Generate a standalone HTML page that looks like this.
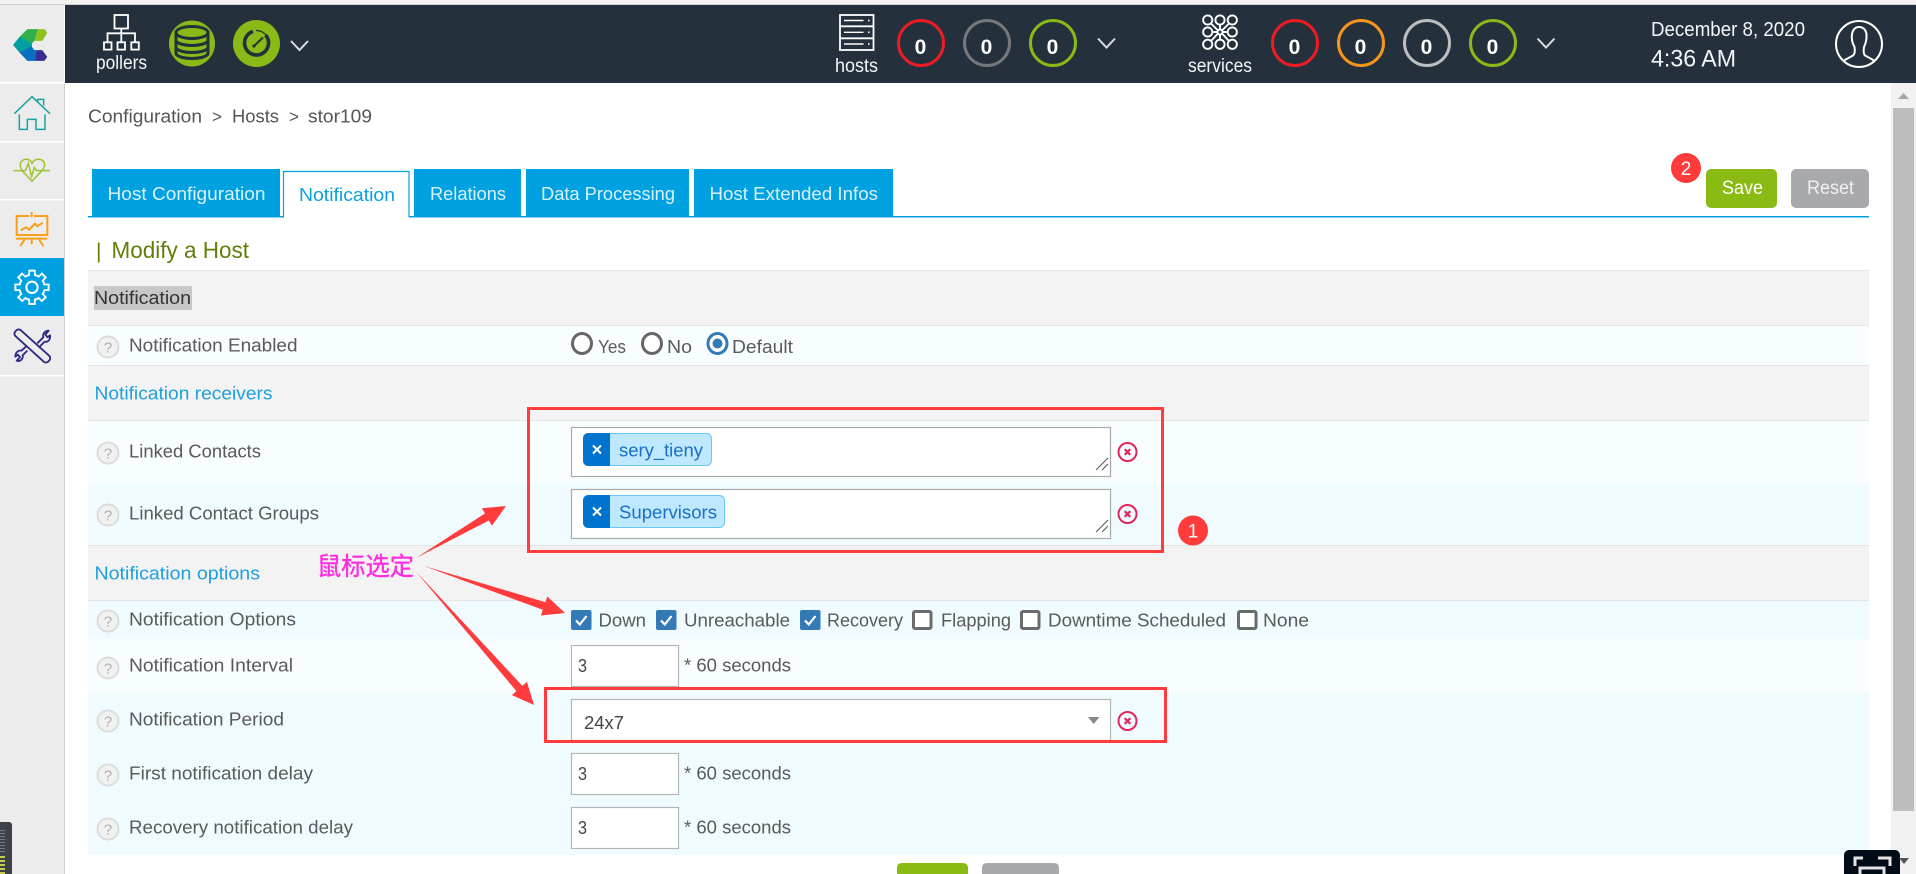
<!DOCTYPE html>
<html lang="en"><head><meta charset="utf-8"><title>Modify a Host</title>
<style>
html,body{margin:0;padding:0;background:#fff;width:1916px;height:874px;overflow:hidden}
svg{display:block}
text{font-family:"Liberation Sans","Noto Sans CJK SC",sans-serif;font-size:18px;fill:#5a5a5a}
.w{fill:#fff}.hd{font-size:19px;fill:#f2f6f8}.z{font-size:21px;font-weight:700;fill:#fff}
.tab{font-size:18.5px;fill:#d8f1fb}.blue{fill:#1d9fe0}
.chip{fill:#1a6fc9}
</style></head><body>
<svg width="1916" height="874" viewBox="0 0 1916 874" xmlns="http://www.w3.org/2000/svg">
<defs>
<g id="help"><circle r="10.5" fill="#f1f1f1" stroke="#dcdcdc" stroke-width="2"/><text x="0" y="5.5" text-anchor="middle" style="font-size:15px;fill:#b0b0b0">?</text></g>
<g id="rm" fill="none" stroke="#e2275c"><circle r="9" stroke-width="2"/><path d="M-2.8 -2.8L2.8 2.8M2.8 -2.8L-2.8 2.8" stroke-width="2.2"/></g>
<g id="cb"><rect width="20.5" height="20" rx="2" fill="#337ab7"/><path d="M5 10.5L8.8 14.5L15.5 6" fill="none" stroke="#fff" stroke-width="2.2"/></g>
<g id="ub"><rect x="1.5" y="1.5" width="17.5" height="17" rx="1.5" fill="#fff" stroke="#6b6b6b" stroke-width="3"/></g>
<g id="rs" stroke="#555" stroke-width="1"><path d="M1096 470L1108 458M1102 470L1108 464"/></g>
<path id="chev" d="M0 0L8.5 9L17 0" fill="none" stroke="#d8dde0" stroke-width="2"/>
</defs>

<!-- chrome -->
<rect width="1916" height="4" fill="#f2f2f2"/><rect y="4" width="1916" height="1" fill="#cfcfcf"/>
<rect y="5" width="64" height="869" fill="#ececec"/><rect x="64" y="83" width="1" height="791" fill="#cfcfcf"/>
<rect x="65" y="5" width="1851" height="78" fill="#24303b"/>
<g fill="#fff"><rect y="82" width="64" height="1.5"/><rect y="141" width="64" height="1.5"/><rect y="199" width="64" height="1.5"/><rect y="375" width="64" height="1.5"/></g>
<rect y="258" width="64" height="58" fill="#00a1e0"/>

<!-- logo -->
<g stroke-width=".8" stroke-linejoin="round">
<polygon points="37,29.5 44.5,29.5 46.8,33 42,40.5 34,40.5" fill="#8cc21f" stroke="#8cc21f"/>
<polygon points="27.5,29.5 37,29.5 34,40.5 31.5,43.5 20,37" fill="#2fb04c" stroke="#2fb04c"/>
<polygon points="20,37 13.5,45 20,52.5 31.5,47 31.5,43.5" fill="#00a0a0" stroke="#00a0a0"/>
<polygon points="20,52.5 27.5,60.5 36,60.5 37,50.5 34,50.5 31.5,47" fill="#0a6fc0" stroke="#0a6fc0"/>
<polygon points="36,60.5 44,60.5 46.8,57 42,50.5 37,50.5" fill="#3b2d8f" stroke="#3b2d8f"/>
</g>

<!-- sidebar icons -->
<g transform="translate(0,80) scale(.3333)" fill="none" stroke-width="4.5">
<g stroke="#17a3a3"><path d="M43 101L96 50L150 101M113 66V58H131V77M58 103V148H82V118H108V148H135V103"/></g>
<g stroke="#9cc431"><path d="M66 270C52 250 68 236 82 238C90 239 94 244 96 250C100 242 108 237 118 238C134 240 140 256 126 272L96 304L66 272"/><path d="M40 272H76L85 250L95 290L103 262L110 272H150"/></g>
<g stroke="#f9a01b" stroke-width="6"><path d="M88 408H50V465H142V408H102M95 396V412M48 476H142M74 478L61 498M95 478V492M117 478L130 498"/><path d="M62 451L78 442L88 449L105 431L112 439L128 428"/></g>
<g transform="translate(96,622)">
<g fill="#fff" stroke="none"><circle r="41"/>
<rect x="-11" y="-53" width="22" height="106"/><rect x="-11" y="-53" width="22" height="106" transform="rotate(45)"/><rect x="-11" y="-53" width="22" height="106" transform="rotate(90)"/><rect x="-11" y="-53" width="22" height="106" transform="rotate(135)"/></g>
<g fill="#00a1e0" stroke="none"><circle r="35"/>
<rect x="-6" y="-47" width="12" height="94"/><rect x="-6" y="-47" width="12" height="94" transform="rotate(45)"/><rect x="-6" y="-47" width="12" height="94" transform="rotate(90)"/><rect x="-6" y="-47" width="12" height="94" transform="rotate(135)"/></g>
<circle r="17" stroke="#fff" stroke-width="6"/>
</g>
<g stroke="#2b2a86" stroke-width="5.5" stroke-linejoin="round">
<rect x="30" y="786" width="134" height="24" rx="10" transform="rotate(42 97 798)"/>
<path d="M112 790L130 772C127 762 135 752 146 752L136 764L143 772L150 766C152 778 144 788 134 785L116 803M82 812L68 826C70 838 60 846 50 842L60 832L54 824L46 830C46 816 56 810 64 812L78 800"/>
</g>
</g>

<!-- bottom-left widget -->
<rect x="-6" y="822" width="18" height="60" rx="3" fill="#3d4248"/>
<g fill="#767c82"><rect x="0" y="830" width="5" height="1"/><rect x="0" y="833" width="5" height="1"/><rect x="0" y="836" width="5" height="1"/><rect x="0" y="839" width="5" height="1"/><rect x="0" y="842" width="5" height="1"/><rect x="0" y="845" width="5" height="1"/><rect x="0" y="848" width="5" height="1"/><rect x="0" y="851" width="5" height="1"/></g>
<g fill="#c3cc4c"><rect x="0" y="856" width="5" height="2"/><rect x="0" y="860" width="5" height="2"/><rect x="0" y="864" width="5" height="2"/><rect x="0" y="868" width="5" height="2"/><rect x="0" y="872" width="5" height="2"/></g>

<!-- header: pollers -->
<g fill="none" stroke="#fff" stroke-width="1.8">
<rect x="114.5" y="15" width="13.5" height="13.5"/><path d="M121.3 28.5V33.3M107.5 42V33.3H135V42M121.3 33.3V42"/>
<rect x="104" y="42.3" width="7.5" height="7.3"/><rect x="117.5" y="42.3" width="7.5" height="7.3"/><rect x="131.3" y="42.3" width="7.5" height="7.3"/>
</g>
<text x="96" y="69" class="hd" textLength="51" lengthAdjust="spacingAndGlyphs">pollers</text>
<circle cx="192" cy="43.5" r="23" fill="#89ba17"/>
<g fill="none" stroke="#24303b" stroke-width="3"><ellipse cx="192" cy="32.5" rx="16" ry="6"/><path d="M176 33V54C180 60 204 60 208 54V33M176 41C180 47 204 47 208 41M176 48C180 54 204 54 208 48"/></g>
<circle cx="256.5" cy="43.5" r="23.5" fill="#89ba17"/>
<g fill="none" stroke="#24303b"><path d="M265.5 35A12 12 0 1 1 253 31.5" stroke-width="3.6"/><path d="M256 30.5A13 13 0 0 1 268 38" stroke-width="1.2"/><path d="M254 46L263 37.5" stroke-width="2"/><circle cx="254" cy="46" r="1.6" fill="#24303b" stroke="none"/></g>
<use href="#chev" transform="translate(291,41)"/>

<!-- hosts -->
<g fill="none" stroke="#fff" stroke-width="1.8"><rect x="840" y="15" width="33.5" height="35"/><path d="M840 26.3H873.5M840 38.3H873.5"/><path d="M844 20.5H863.5M844 32.3H863.5M844 44H863.5" stroke-width="1.4"/></g>
<g fill="#fff"><rect x="868" y="19.7" width="1.6" height="1.6"/><rect x="868" y="31.5" width="1.6" height="1.6"/><rect x="868" y="43.2" width="1.6" height="1.6"/></g>
<text x="835" y="72" class="hd" textLength="43" lengthAdjust="spacingAndGlyphs">hosts</text>
<g fill="none" stroke-width="3"><circle cx="921" cy="43" r="22.5" stroke="#ed1c24"/><circle cx="987" cy="43" r="22.5" stroke="#77787b"/><circle cx="1053" cy="43" r="22.5" stroke="#89ba17"/>
<circle cx="1295" cy="43" r="22.5" stroke="#ed1c24"/><circle cx="1361" cy="43" r="22.5" stroke="#f7941d"/><circle cx="1427" cy="43" r="22.5" stroke="#bcbec0"/><circle cx="1493" cy="43" r="22.5" stroke="#89ba17"/></g>
<g class="n"><text x="920.5" y="54" class="z" text-anchor="middle">0</text><text x="986.5" y="54" class="z" text-anchor="middle">0</text><text x="1052.5" y="54" class="z" text-anchor="middle">0</text>
<text x="1294.5" y="54" class="z" text-anchor="middle">0</text><text x="1360.5" y="54" class="z" text-anchor="middle">0</text><text x="1426.5" y="54" class="z" text-anchor="middle">0</text><text x="1492.5" y="54" class="z" text-anchor="middle">0</text></g>
<use href="#chev" transform="translate(1098,38.5)"/>
<use href="#chev" transform="translate(1537.5,38.5)"/>

<!-- services -->
<g fill="none" stroke="#fff" stroke-width="1.9">
<circle cx="1207.7" cy="20" r="4.6"/><circle cx="1220" cy="20" r="4.6"/><circle cx="1232.3" cy="20" r="4.6"/>
<circle cx="1207.7" cy="32" r="4.6"/><circle cx="1220" cy="32" r="2.5"/><circle cx="1232.3" cy="32" r="4.6"/>
<circle cx="1207.7" cy="44.3" r="4.6"/><circle cx="1220" cy="44.3" r="4.6"/><circle cx="1232.3" cy="44.3" r="4.6"/>
<path d="M1211 23.5L1217.5 30M1229 23.5L1222.5 30M1211 41L1217.5 34M1229 41L1222.5 34M1212.5 32H1217M1223 32H1227.5M1220 24.7V29M1220 35V39.5"/>
</g>
<text x="1188" y="72" class="hd" textLength="64" lengthAdjust="spacingAndGlyphs">services</text>

<!-- date -->
<text x="1651" y="36" style="font-size:20.5px;fill:#f2f6f8" textLength="154" lengthAdjust="spacingAndGlyphs">December 8, 2020</text>
<text x="1651" y="66.5" style="font-size:24px;fill:#f2f6f8" textLength="85" lengthAdjust="spacingAndGlyphs">4:36 AM</text>
<g fill="none" stroke="#fff" stroke-width="2"><circle cx="1859" cy="44" r="23"/><path d="M1843 61L1853 55.5Q1855.5 53.5 1854.5 47Q1851 41 1852 34Q1853.5 27 1859 27Q1865 27 1866.5 34Q1867 41 1864 47Q1863 53.5 1865 55.5L1875 61"/></g>

<!-- scrollbar -->
<rect x="1891" y="83" width="25" height="791" fill="#f1f1f1"/>
<rect x="1893" y="108" width="21" height="703" fill="#bdbdbd"/>
<path d="M1898 99L1903.5 93L1909 99Z" fill="#a5a5a5"/>

<!-- breadcrumb -->
<g>
<text x="88" y="122.5" style="font-size:18.5px;fill:#555" textLength="114" lengthAdjust="spacingAndGlyphs">Configuration</text>
<text x="212" y="122.5" style="font-size:17.5px;fill:#555" textLength="10" lengthAdjust="spacingAndGlyphs">&gt;</text>
<text x="232" y="122.5" style="font-size:18.5px;fill:#555" textLength="47" lengthAdjust="spacingAndGlyphs">Hosts</text>
<text x="289" y="122.5" style="font-size:17.5px;fill:#555" textLength="10" lengthAdjust="spacingAndGlyphs">&gt;</text>
<text x="308" y="122.5" style="font-size:18.5px;fill:#555" textLength="64" lengthAdjust="spacingAndGlyphs">stor109</text>
</g>

<!-- tabs -->
<rect x="88" y="216" width="1781" height="1.5" fill="#00a1e0"/>
<g fill="#00a1e0"><rect x="92" y="169" width="188" height="48"/><rect x="414" y="169" width="107" height="48"/><rect x="526" y="169" width="163" height="48"/><rect x="694" y="169" width="199" height="48"/></g>
<path d="M283.5 217.5V171.5H409V217.5" fill="#fff" stroke="#00a1e0" stroke-width="1.2"/>
<rect x="284" y="215" width="124.5" height="3" fill="#fff"/>
<text x="107.5" y="200" class="tab" textLength="158" lengthAdjust="spacingAndGlyphs">Host Configuration</text>
<text x="299" y="201" style="font-size:18.5px;fill:#0aa0e0" textLength="96" lengthAdjust="spacingAndGlyphs">Notification</text>
<text x="430" y="200" class="tab" textLength="76" lengthAdjust="spacingAndGlyphs">Relations</text>
<text x="541" y="200" class="tab" textLength="134" lengthAdjust="spacingAndGlyphs">Data Processing</text>
<text x="709.5" y="200" class="tab" textLength="168.5" lengthAdjust="spacingAndGlyphs">Host Extended Infos</text>

<!-- top buttons -->
<rect x="1706" y="169" width="71" height="39" rx="5" fill="#8aba14"/>
<rect x="1791" y="169" width="78" height="39" rx="5" fill="#a8a9ad"/>
<text x="1722" y="194" class="w" style="font-size:19px" textLength="41" lengthAdjust="spacingAndGlyphs">Save</text>
<text x="1807" y="194" style="font-size:19px;fill:#f0f0f0" textLength="47" lengthAdjust="spacingAndGlyphs">Reset</text>

<!-- heading -->
<text x="96" y="258" style="font-size:21px;fill:#5f7f06">|</text>
<text x="111.5" y="258" style="font-size:23px;fill:#5f7f06" textLength="137.5" lengthAdjust="spacingAndGlyphs">Modify a Host</text>

<!-- table rows -->
<rect x="88" y="270" width="1781" height="55" fill="#f3f3f3"/><rect x="88" y="270" width="1781" height="1" fill="#e4e4e4"/>
<rect x="88" y="325" width="1781" height="40" fill="#f8fdff"/><rect x="88" y="325" width="1781" height="1" fill="#e8e8e8"/>
<rect x="88" y="365" width="1781" height="55" fill="#f3f3f3"/><rect x="88" y="365" width="1781" height="1" fill="#e4e4e4"/>
<rect x="88" y="420" width="1781" height="63" fill="#f8fdff"/><rect x="88" y="420" width="1781" height="1" fill="#e4e4e4"/>
<rect x="88" y="483" width="1781" height="62" fill="#effbff"/>
<rect x="88" y="545" width="1781" height="55" fill="#f3f3f3"/><rect x="88" y="545" width="1781" height="1" fill="#e4e4e4"/>
<rect x="88" y="600" width="1781" height="39" fill="#effbff"/><rect x="88" y="600" width="1781" height="1" fill="#e4e4e4"/>
<rect x="88" y="639" width="1781" height="54" fill="#f8fdff"/>
<rect x="88" y="693" width="1781" height="162" fill="#effbff"/>

<!-- section heads -->
<rect x="94" y="286" width="98" height="24" fill="#c8c8c8"/>
<text x="94" y="304" style="font-size:18px;fill:#333" textLength="97" lengthAdjust="spacingAndGlyphs">Notification</text>
<text x="94.5" y="399.5" class="blue" textLength="178" lengthAdjust="spacingAndGlyphs">Notification receivers</text>
<text x="94.5" y="579.5" class="blue" textLength="165.5" lengthAdjust="spacingAndGlyphs">Notification options</text>

<!-- help icons -->
<use href="#help" x="108" y="347"/><use href="#help" x="108" y="453"/><use href="#help" x="108" y="515"/><use href="#help" x="108" y="621"/><use href="#help" x="108" y="668"/><use href="#help" x="108" y="721"/><use href="#help" x="108" y="775"/><use href="#help" x="108" y="829"/>

<!-- labels -->
<text x="129" y="351.5" textLength="168.5" lengthAdjust="spacingAndGlyphs">Notification Enabled</text>
<text x="129" y="457.5" textLength="132" lengthAdjust="spacingAndGlyphs">Linked Contacts</text>
<text x="129" y="519.5" textLength="190" lengthAdjust="spacingAndGlyphs">Linked Contact Groups</text>
<text x="129" y="625.5" textLength="167" lengthAdjust="spacingAndGlyphs">Notification Options</text>
<text x="129" y="671.5" textLength="164" lengthAdjust="spacingAndGlyphs">Notification Interval</text>
<text x="129" y="725.5" textLength="155" lengthAdjust="spacingAndGlyphs">Notification Period</text>
<text x="129" y="779.5" textLength="184" lengthAdjust="spacingAndGlyphs">First notification delay</text>
<text x="129" y="833.5" textLength="224" lengthAdjust="spacingAndGlyphs">Recovery notification delay</text>

<!-- radios -->
<g fill="#fff" stroke="#666" stroke-width="3"><ellipse cx="582" cy="343.5" rx="9.5" ry="10"/><ellipse cx="652" cy="343.5" rx="9.5" ry="10"/></g>
<ellipse cx="717.5" cy="343.5" rx="9.5" ry="10" fill="#fff" stroke="#337ab7" stroke-width="3"/><circle cx="717.5" cy="343.5" r="5" fill="#337ab7"/>
<text x="598" y="353" textLength="28" lengthAdjust="spacingAndGlyphs">Yes</text>
<text x="667" y="353" textLength="25" lengthAdjust="spacingAndGlyphs">No</text>
<text x="732" y="353" textLength="61" lengthAdjust="spacingAndGlyphs">Default</text>

<!-- multi-selects -->
<rect x="571.5" y="427.5" width="539" height="49" fill="#fff" stroke="#a9a9a9" stroke-width="1.2"/>
<rect x="571.5" y="489.5" width="539" height="49" fill="#fff" stroke="#a9a9a9" stroke-width="1.2"/>
<rect x="583.5" y="433.5" width="128" height="32" rx="5" fill="#bde8ff" stroke="#6cc4f7"/>
<path d="M610 433H589Q583 433 583 439V460Q583 466 589 466H610Z" fill="#0073cf"/>
<path d="M593 445.5L601 453.5M601 445.5L593 453.5" stroke="#fff" stroke-width="2"/>
<rect x="583.5" y="495.5" width="141" height="32" rx="5" fill="#bde8ff" stroke="#6cc4f7"/>
<path d="M610 495H589Q583 495 583 501V522Q583 528 589 528H610Z" fill="#0073cf"/>
<path d="M593 507.5L601 515.5M601 507.5L593 515.5" stroke="#fff" stroke-width="2"/>
<text x="619" y="456.5" class="chip" textLength="84" lengthAdjust="spacingAndGlyphs">sery_tieny</text>
<text x="619" y="518.5" class="chip" textLength="98" lengthAdjust="spacingAndGlyphs">Supervisors</text>
<use href="#rs"/><use href="#rs" y="62"/>
<use href="#rm" x="1127.5" y="452"/><use href="#rm" x="1127.5" y="514"/><use href="#rm" x="1127.5" y="721"/>

<!-- checkboxes -->
<use href="#cb" x="571" y="610"/><use href="#cb" x="656" y="610"/><use href="#cb" x="800" y="610"/>
<use href="#ub" x="912" y="610"/><use href="#ub" x="1020" y="610"/><use href="#ub" x="1237" y="610"/>
<text x="598.5" y="626.5" textLength="47.5" lengthAdjust="spacingAndGlyphs">Down</text>
<text x="684" y="626.5" textLength="106" lengthAdjust="spacingAndGlyphs">Unreachable</text>
<text x="827" y="626.5" textLength="76" lengthAdjust="spacingAndGlyphs">Recovery</text>
<text x="941" y="626.5" textLength="70" lengthAdjust="spacingAndGlyphs">Flapping</text>
<text x="1048" y="626.5" textLength="178" lengthAdjust="spacingAndGlyphs">Downtime Scheduled</text>
<text x="1263" y="626.5" textLength="46" lengthAdjust="spacingAndGlyphs">None</text>

<!-- inputs -->
<g fill="#fff" stroke="#b5b5b5" stroke-width="1.2"><rect x="571.5" y="645.5" width="107" height="41"/><rect x="571.5" y="753.5" width="107" height="41"/><rect x="571.5" y="807.5" width="107" height="41"/><rect x="571.5" y="699.5" width="539" height="41"/></g>
<text x="578" y="672" style="fill:#444" textLength="9" lengthAdjust="spacingAndGlyphs">3</text><text x="578" y="780" style="fill:#444" textLength="9" lengthAdjust="spacingAndGlyphs">3</text><text x="578" y="834" style="fill:#444" textLength="9" lengthAdjust="spacingAndGlyphs">3</text>
<text x="684" y="671.5" textLength="107" lengthAdjust="spacingAndGlyphs">* 60 seconds</text>
<text x="684" y="779.5" textLength="107" lengthAdjust="spacingAndGlyphs">* 60 seconds</text>
<text x="684" y="833.5" textLength="107" lengthAdjust="spacingAndGlyphs">* 60 seconds</text>
<text x="584" y="729" style="fill:#444" textLength="40" lengthAdjust="spacingAndGlyphs">24x7</text>
<path d="M1088 717H1099.5L1093.7 724Z" fill="#888"/>

<!-- bottom buttons -->
<path d="M897 874V868Q897 863 902 863H963Q968 863 968 868V874Z" fill="#8aba14"/>
<path d="M982 874V868Q982 863 987 863H1054Q1059 863 1059 868V874Z" fill="#a8a9ad"/>

<!-- annotations -->
<g fill="none" stroke="#ff3b3b" stroke-width="3"><rect x="528.5" y="408.5" width="634" height="143"/><rect x="545.5" y="688.5" width="620" height="53"/></g>
<g fill="#ff3b3b">
<ellipse cx="1686" cy="168" rx="15" ry="15"/><ellipse cx="1193" cy="530.5" rx="15" ry="15"/>
<polygon points="416,558 488.9,520.5 491.9,525.7 506,506 481.9,508.3 484.9,513.5"/>
<polygon points="424,566 542.8,609.8 540.9,615.5 565,613 547.3,596.5 545.4,602.2"/>
<polygon points="415.5,571 516.4,691.1 511.9,695.1 534,705 526.9,681.9 522.4,685.9"/>
</g>
<text x="1686" y="175" class="w" text-anchor="middle" style="font-size:19px">2</text>
<text x="1193" y="537.5" class="w" text-anchor="middle" style="font-size:19px">1</text>
<text x="317" y="575" style="font-size:25px;fill:#ff2de0;stroke:#ff2de0;stroke-width:.4;font-family:'Liberation Sans','Noto Sans CJK SC',sans-serif" textLength="97" lengthAdjust="spacingAndGlyphs">鼠标选定</text>

<!-- capture widget -->
<rect x="1844" y="850" width="56" height="30" rx="5" fill="#020c18"/>
<path d="M1855 866V858H1863M1878 858H1890V866" fill="none" stroke="#e4e4e4" stroke-width="3"/>
<rect x="1860" y="868" width="24" height="10" fill="none" stroke="#e4e4e4" stroke-width="3"/>
<path d="M1899 858H1909L1904 864Z" fill="#555"/>
</svg>
</body></html>
